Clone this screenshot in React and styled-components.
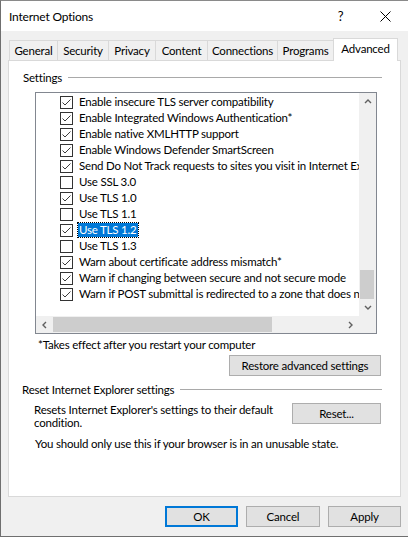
import React from 'react'
import styled, { createGlobalStyle } from 'styled-components'

const GlobalStyle = createGlobalStyle`
  html, body {
    margin: 0;
    padding: 0;
    background: #f0f0f0;
  }
  * { box-sizing: border-box; }
`

const Window = styled.div`
  width: 408px;
  height: 537px;
  background: #f0f0f0;
  border-top: 1px solid #8a8a8a;
  border-left: 1px solid #6f6f6f;
  border-bottom: 1px solid #6f6f6f;
  font-family: Lato, "Liberation Sans", sans-serif;
  font-size: 11.5px;
  letter-spacing: -0.2px;
  color: #000;
  display: flex;
  flex-direction: column;
  overflow: hidden;
`

const TitleBar = styled.div`
  height: 30px;
  background: #fff;
  display: flex;
  align-items: center;
  padding-left: 8px;
`

const Title = styled.div`
  flex: 1;
  line-height: 15px;
  font-size: 12px;
`

const CaptionButton = styled.div`
  width: 45px;
  height: 30px;
  display: flex;
  align-items: center;
  justify-content: center;
  font-size: 13px;
`

const Body = styled.div`
  padding: 0 7px 0 7px;
  display: flex;
  flex-direction: column;
`

const TabStrip = styled.div`
  margin-top: 7px;
  height: 22px;
  display: flex;
  align-items: flex-end;
  padding-left: 1px;
`

const Tab = styled.div`
  width: ${p => p.$w}px;
  height: ${p => (p.$active ? 23 : 20)}px;
  margin-left: ${p => (p.$first ? 0 : -1)}px;
  margin-bottom: ${p => (p.$active ? -1 : 0)}px;
  padding-bottom: ${p => (p.$active ? 3 : 0)}px;
  border: 1px solid #d9d9d9;
  border-bottom: none;
  background: ${p => (p.$active ? '#fff' : '#f0f0f0')};
  display: flex;
  align-items: center;
  justify-content: center;
  position: relative;
  z-index: ${p => (p.$active ? 1 : 0)};
  white-space: nowrap;
`

const Panel = styled.div`
  height: 437px;
  background: #fff;
  border: 1px solid #d9d9d9;
  display: flex;
  flex-direction: column;
`

const GroupHeader = styled.div`
  display: flex;
  align-items: center;
  gap: 6px;
  padding: 0 18px 0 ${p => p.$left}px;
  margin-top: ${p => p.$top}px;
  line-height: 15px;

  &::after {
    content: '';
    flex: 1;
    height: 1px;
    background: #a9a9a9;
  }
`

const ListBox = styled.div`
  margin: 7px 0 0 26px;
  width: 342px;
  height: 242px;
  border: 1px solid #828790;
  display: grid;
  grid-template-columns: 1fr 17px;
  grid-template-rows: 1fr 17px;
  overflow: hidden;
`

const ListContent = styled.div`
  padding-top: 1px;
  overflow: hidden;
`

const Row = styled.div`
  height: 16px;
  display: flex;
  align-items: center;
  padding-left: 24px;
  white-space: nowrap;
`

const Box = styled.span`
  flex: none;
  width: 13px;
  height: 13px;
  border: 1px solid #333;
  background: #fff;
  display: flex;
  align-items: center;
  justify-content: center;
`

const Label = styled.span`
  margin-left: 5px;
  padding: 0 1px;
  line-height: 14px;
  background: ${p => (p.$selected ? '#0078d7' : 'transparent')};
  color: ${p => (p.$selected ? '#fff' : '#000')};
  outline: ${p => (p.$selected ? '1px dotted #000' : 'none')};
`

const VScroll = styled.div`
  background: #f0f0f0;
  display: flex;
  flex-direction: column;
`

const HScroll = styled.div`
  background: #f0f0f0;
  display: flex;
`

const Corner = styled.div`
  background: #f0f0f0;
`

const Arrow = styled.div`
  flex: none;
  width: 17px;
  height: 17px;
  display: flex;
  align-items: center;
  justify-content: center;
`

const Track = styled.div`
  flex: 1;
  display: flex;
  flex-direction: ${p => (p.$vertical ? 'column' : 'row')};
  justify-content: ${p => (p.$vertical ? 'flex-end' : 'flex-start')};
`

const Thumb = styled.div`
  background: #cdcdcd;
  ${p => (p.$vertical
    ? `height: ${p.$size}px; margin: 0 2px 0 1px;`
    : `width: ${p.$size}px; margin: 1px 0 1px 0;`)}
`

const Note = styled.div`
  margin: 3px 0 0 29px;
  line-height: 15px;
`

const Button = styled.div`
  width: ${p => p.$w}px;
  height: 21px;
  background: #e1e1e1;
  border: ${p => (p.$default ? '2px solid #0078d7' : '1px solid #adadad')};
  display: flex;
  align-items: center;
  justify-content: center;
  white-space: nowrap;
  flex: none;
`

const RestoreRow = styled.div`
  display: flex;
  justify-content: flex-end;
  padding-right: 19px;
  margin-top: 3px;
`

const ResetRow = styled.div`
  display: flex;
  justify-content: space-between;
  align-items: flex-start;
  padding: 0 19px 0 25px;
  margin-top: 6px;
`

const ResetText = styled.div`
  line-height: 13px;
  white-space: nowrap;
`

const Hint = styled.div`
  margin: 7px 0 0 26px;
  line-height: 15px;
`

const Footer = styled.div`
  display: flex;
  justify-content: flex-end;
  gap: 8px;
  margin-top: 9px;
`

const Check = () => (
  <svg width="11" height="11" viewBox="0 0 11 11">
    <polyline points="1.5,5.5 4,8 9.5,2.5" fill="none" stroke="#3c3c3c" strokeWidth="1" />
  </svg>
)

const Chevron = ({ dir }) => {
  const pts = {
    up: '1,5 4,2 7,5',
    down: '1,2 4,5 7,2',
    left: '5,1 2,4 5,7',
    right: '2,1 5,4 2,7',
  }[dir]
  return (
    <svg width="8" height="8" viewBox="0 0 8 8">
      <polyline points={pts} fill="none" stroke="#606060" strokeWidth="1.4" />
    </svg>
  )
}

const tabs = [
  { name: 'General', w: 49 },
  { name: 'Security', w: 52 },
  { name: 'Privacy', w: 48 },
  { name: 'Content', w: 53 },
  { name: 'Connections', w: 71 },
  { name: 'Programs', w: 57 },
  { name: 'Advanced', w: 65, active: true },
]

const items = [
  { text: 'Enable insecure TLS server compatibility', on: true },
  { text: 'Enable Integrated Windows Authentication*', on: true },
  { text: 'Enable native XMLHTTP support', on: true },
  { text: 'Enable Windows Defender SmartScreen', on: true },
  { text: 'Send Do Not Track requests to sites you visit in Internet Explorer*', on: true },
  { text: 'Use SSL 3.0', on: false },
  { text: 'Use TLS 1.0', on: true },
  { text: 'Use TLS 1.1', on: false },
  { text: 'Use TLS 1.2', on: true, selected: true },
  { text: 'Use TLS 1.3', on: false },
  { text: 'Warn about certificate address mismatch*', on: true },
  { text: 'Warn if changing between secure and not secure mode', on: true },
  { text: 'Warn if POST submittal is redirected to a zone that does not permit posts', on: true },
]

export default function App() {
  return (
    <>
      <GlobalStyle />
      <Window>
        <TitleBar>
          <Title>Internet Options</Title>
          <CaptionButton>?</CaptionButton>
          <CaptionButton>
            <svg width="11" height="11" viewBox="0 0 11 11">
              <path d="M0.5 0.5 L10.5 10.5 M10.5 0.5 L0.5 10.5" stroke="#000" strokeWidth="1" />
            </svg>
          </CaptionButton>
        </TitleBar>
        <Body>
          <TabStrip>
            {tabs.map((t, i) => (
              <Tab key={t.name} $w={t.w} $active={t.active} $first={i === 0}>{t.name}</Tab>
            ))}
          </TabStrip>
          <Panel>
            <GroupHeader $left={14} $top={9}>Settings</GroupHeader>
            <ListBox>
              <ListContent>
                {items.map(it => (
                  <Row key={it.text}>
                    <Box>{it.on && <Check />}</Box>
                    <Label $selected={it.selected}>{it.text}</Label>
                  </Row>
                ))}
              </ListContent>
              <VScroll>
                <Arrow><Chevron dir="up" /></Arrow>
                <Track $vertical>
                  <Thumb $vertical $size={29} />
                </Track>
                <Arrow><Chevron dir="down" /></Arrow>
              </VScroll>
              <HScroll>
                <Arrow><Chevron dir="left" /></Arrow>
                <Track>
                  <Thumb $size={219} />
                </Track>
                <Arrow><Chevron dir="right" /></Arrow>
              </HScroll>
              <Corner />
            </ListBox>
            <Note>*Takes effect after you restart your computer</Note>
            <RestoreRow>
              <Button $w={152}>Restore advanced settings</Button>
            </RestoreRow>
            <GroupHeader $left={13} $top={6}>Reset Internet Explorer settings</GroupHeader>
            <ResetRow>
              <ResetText>
                Resets Internet Explorer's settings to their default
                <br />
                condition.
              </ResetText>
              <Button $w={89}>Reset...</Button>
            </ResetRow>
            <Hint>You should only use this if your browser is in an unusable state.</Hint>
          </Panel>
          <Footer>
            <Button $w={73} $default>OK</Button>
            <Button $w={74}>Cancel</Button>
            <Button $w={73}>Apply</Button>
          </Footer>
        </Body>
      </Window>
    </>
  )
}
